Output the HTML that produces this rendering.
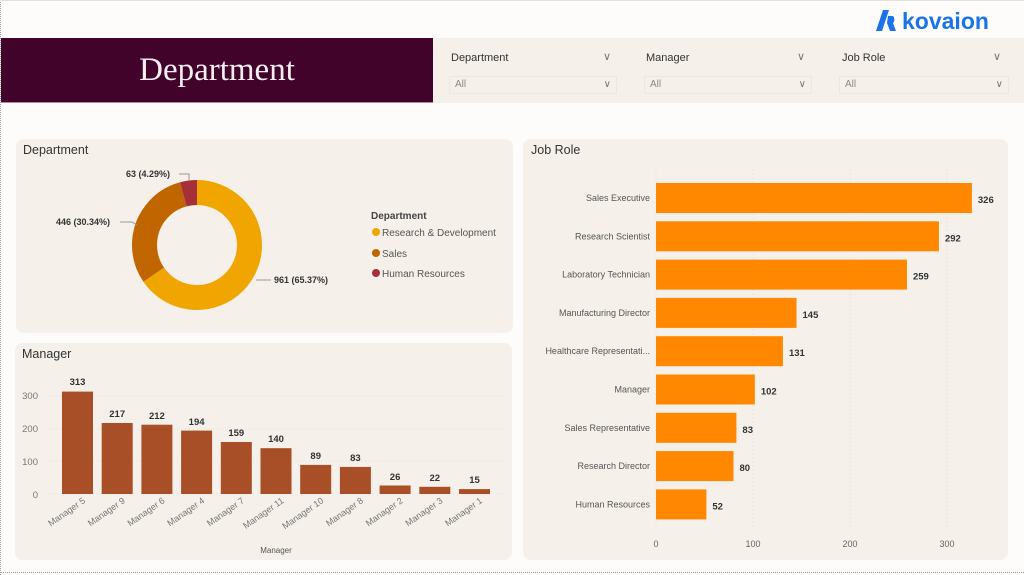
<!DOCTYPE html>
<html><head><meta charset="utf-8"><style>
*{margin:0;padding:0;box-sizing:border-box}
body{width:1024px;height:575px;background:#fdfcfa;font-family:"Liberation Sans",sans-serif;position:relative;overflow:hidden}
.abs{position:absolute}
.panel{position:absolute;background:#f5f1ea;border-radius:8px}
.ttl{position:absolute;font-size:12.5px;color:#333;}
.slab{font-size:11px;color:#333}
.dd{position:absolute;top:76px;height:18px;border:1px solid #ece8e0;font-size:10px;color:#888;padding:2px 5px}
</style></head><body>
<div class="abs" style="left:0;top:0;width:2px;height:575px;border-left:1px dotted #999"></div>
<div class="abs" style="left:0;top:572px;width:1024px;border-top:1px dotted #999"></div>
<div class="abs" style="left:0;top:0;width:1024px;border-top:1px solid #e0e0e0"></div>
<svg class="abs" style="left:876px;top:8px" width="145" height="26" viewBox="0 0 145 26">
<path d="M7 2h6l-7 21H0z" fill="#1a73e8"/><path d="M12 8h5a5 5 0 0 1 0 7l3 8h-6l-3-8z" fill="#1a73e8"/>
<text x="26" y="21" font-family="Liberation Sans,sans-serif" font-size="23" font-weight="bold" fill="#1a73e8">kovaion</text></svg>
<div class="abs" style="left:1px;top:38px;width:432px;height:65px;background:#42032b;border-bottom:1px solid #b08aa0"></div>
<div class="abs" style="left:1px;top:52px;width:432px;text-align:center;font-family:'Liberation Serif',serif;font-size:33px;color:#f4eef0">Department</div>
<div class="abs" style="left:433px;top:38px;width:591px;height:65px;background:#f5f1ea"></div>
<div class="abs slab" style="left:451px;top:52px">Department</div><div class="abs" style="left:603px;top:50px;color:#777;font-size:11px">&#8744;</div>
<div class="dd" style="left:449px;width:168px">All<span style="float:right;color:#777">&#8744;</span></div>
<div class="abs slab" style="left:646px;top:52px">Manager</div><div class="abs" style="left:797px;top:50px;color:#777;font-size:11px">&#8744;</div>
<div class="dd" style="left:644px;width:168px">All<span style="float:right;color:#777">&#8744;</span></div>
<div class="abs slab" style="left:842px;top:52px">Job Role</div><div class="abs" style="left:993px;top:50px;color:#777;font-size:11px">&#8744;</div>
<div class="dd" style="left:839px;width:170px">All<span style="float:right;color:#777">&#8744;</span></div>

<div class="panel" style="left:16px;top:139px;width:497px;height:194px"></div>
<div class="ttl" style="left:23px;top:143px">Department</div>
<svg class="abs" style="left:16px;top:139px" width="497" height="194">
<g transform="translate(181,106) rotate(-90)">
<circle r="52.5" fill="none" stroke="#f0a500" stroke-width="25" stroke-dasharray="215.6 400"/>
<circle r="52.5" fill="none" stroke="#c06500" stroke-width="25" stroke-dasharray="0 215.6 100.1 400"/>
<circle r="52.5" fill="none" stroke="#a5303a" stroke-width="25" stroke-dasharray="0 315.7 14.2 400"/>
</g>
<g font-size="9" font-weight="bold" fill="#333">
<text x="110" y="38">63 (4.29%)</text><path d="M163 35h10v6" fill="none" stroke="#999"/>
<text x="40" y="86">446 (30.34%)</text><path d="M104 83h12l5 3" fill="none" stroke="#999"/>
<text x="258" y="144">961 (65.37%)</text><path d="M240 141h15" fill="none" stroke="#999"/>
</g>
<text x="355" y="80" font-size="10" font-weight="bold" fill="#444">Department</text>
<g font-size="10" fill="#555">
<circle cx="360" cy="93" r="4" fill="#f0a500"/><text x="366" y="97">Research &amp; Development</text>
<circle cx="360" cy="114" r="4" fill="#c06500"/><text x="366" y="118">Sales</text>
<circle cx="360" cy="134" r="4" fill="#a5303a"/><text x="366" y="138">Human Resources</text>
</g></svg>

<div class="panel" style="left:15px;top:343px;width:497px;height:217px"></div>
<div class="ttl" style="left:22px;top:347px">Manager</div>
<svg class="abs" style="left:0;top:340px" width="520" height="235">
<g stroke="#ddd" stroke-dasharray="1 3"><path d="M45 56H505M45 89H505M45 121H505M45 154H505"/></g>
<g font-size="9.5" fill="#777" text-anchor="end"><text x="38" y="59">300</text><text x="38" y="92">200</text><text x="38" y="125">100</text><text x="38" y="158">0</text></g>
<g fill="#a94f27">
<rect x="62" y="51.6" width="31" height="102.4"/>
<rect x="101.7" y="83" width="31" height="71"/>
<rect x="141.4" y="84.7" width="31" height="69.3"/>
<rect x="181.1" y="90.6" width="31" height="63.4"/>
<rect x="220.8" y="102" width="31" height="52"/>
<rect x="260.5" y="108.2" width="31" height="45.8"/>
<rect x="300.2" y="124.9" width="31" height="29.1"/>
<rect x="339.9" y="126.9" width="31" height="27.1"/>
<rect x="379.6" y="145.5" width="31" height="8.5"/>
<rect x="419.3" y="146.8" width="31" height="7.2"/>
<rect x="459" y="149.1" width="31" height="4.9"/>
</g>
<g font-size="9.5" font-weight="bold" fill="#333" text-anchor="middle">
<text x="77.5" y="45">313</text><text x="117.2" y="77">217</text><text x="156.9" y="79">212</text><text x="196.6" y="85">194</text>
<text x="236.3" y="96">159</text><text x="276" y="102">140</text><text x="315.7" y="119">89</text><text x="355.4" y="121">83</text>
<text x="395.1" y="140">26</text><text x="434.8" y="141">22</text><text x="474.5" y="143">15</text>
</g>
<g font-size="9" fill="#777" text-anchor="end">
<text transform="translate(86,162) rotate(-35)">Manager 5</text>
<text transform="translate(125.7,162) rotate(-35)">Manager 9</text>
<text transform="translate(165.4,162) rotate(-35)">Manager 6</text>
<text transform="translate(205.1,162) rotate(-35)">Manager 4</text>
<text transform="translate(244.8,162) rotate(-35)">Manager 7</text>
<text transform="translate(284.5,162) rotate(-35)">Manager 11</text>
<text transform="translate(324.2,162) rotate(-35)">Manager 10</text>
<text transform="translate(363.9,162) rotate(-35)">Manager 8</text>
<text transform="translate(403.6,162) rotate(-35)">Manager 2</text>
<text transform="translate(443.3,162) rotate(-35)">Manager 3</text>
<text transform="translate(483,162) rotate(-35)">Manager 1</text>
</g>
<text x="276" y="213" font-size="8" fill="#555" text-anchor="middle">Manager</text>
</svg>

<div class="panel" style="left:523px;top:139px;width:485px;height:421px"></div>
<div class="ttl" style="left:531px;top:143px">Job Role</div>
<svg class="abs" style="left:0;top:0" width="1024" height="575">
<g stroke="#ddd" stroke-dasharray="1 3"><path d="M656 170V528M753 170V528M850 170V528M947 170V528"/></g>
<g font-size="9" fill="#666" text-anchor="middle"><text x="656" y="547">0</text><text x="753" y="547">100</text><text x="850" y="547">200</text><text x="947" y="547">300</text></g>
<g id="jb"></g>
</svg>
<script>
(function(){var d=[["Sales Executive",326],["Research Scientist",292],["Laboratory Technician",259],["Manufacturing Director",145],["Healthcare Representati...",131],["Manager",102],["Sales Representative",83],["Research Director",80],["Human Resources",52]];
var s="";d.forEach(function(e,i){var y=183+i*38.3,w=e[1]*0.969;
s+='<rect x="656" y="'+y+'" width="'+w+'" height="30" fill="#ff8800"/>';
s+='<text x="650" y="'+(y+18)+'" font-size="9" fill="#555" text-anchor="end">'+e[0]+'</text>';
s+='<text x="'+(656+w+6)+'" y="'+(y+20)+'" font-size="9.5" font-weight="bold" fill="#333">'+e[1]+'</text>';});
document.getElementById("jb").innerHTML=s;})();
</script>
</body></html>
